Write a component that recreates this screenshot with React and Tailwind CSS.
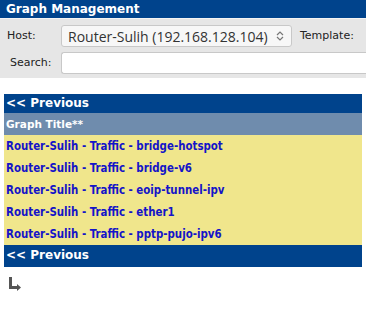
export default function App() {
  const rows = [
    'Router-Sulih - Traffic - bridge-hotspot',
    'Router-Sulih - Traffic - bridge-v6',
    'Router-Sulih - Traffic - eoip-tunnel-ipv',
    'Router-Sulih - Traffic - ether1',
    'Router-Sulih - Traffic - pptp-pujo-ipv6',
  ];

  return (
    <div className="w-[366px] h-[310px] overflow-hidden bg-white font-['DejaVu_Sans',sans-serif]">
      {/* filter box */}
      <div className="h-[18px] bg-[#00438c] text-white font-bold text-[12px] leading-[18px] pl-[6px]">
        Graph Management
      </div>
      <div className="bg-[#e6e6e6] border-t border-[#f4f4f4] h-[60px] pt-[6px]">
        <div className="flex items-center h-[22px]">
          <span className="w-[61px] pl-[7px] text-[11px] text-[#222]">Host:</span>
          <div className="w-[231px] h-[22px] bg-[#f7f7f7] border border-[#c8c8c8] rounded-[3px] flex items-center justify-between pl-[6px] pr-[7px] font-['Open_Sans',sans-serif] text-[14px] text-[#333]">
            <span>Router-Sulih (192.168.128.104)</span>
            <svg width="8" height="12" viewBox="0 0 8 12">
              <path d="M1 5 L4 2 L7 5" fill="none" stroke="#777" strokeWidth="1.2" />
              <path d="M1 7 L4 10 L7 7" fill="none" stroke="#777" strokeWidth="1.2" />
            </svg>
          </div>
          <span className="ml-[8px] text-[11px] text-[#222]">Template:</span>
        </div>
        <div className="flex items-center h-[22px] mt-[5px]">
          <span className="w-[61px] pl-[10px] text-[11px] text-[#222]">Search:</span>
          <div className="flex-1 h-[22px] bg-white border border-[#c8c8c8] rounded-l-[3px] border-r-0" />
        </div>
      </div>

      {/* graph list */}
      <div className="mx-[4px] mt-[16px]">
        <div className="h-[19px] bg-[#00438c] text-white font-bold text-[12px] leading-[19px] pl-[2px]">
          &lt;&lt; Previous
        </div>
        <div className="h-[22px] bg-[#6f8cad] text-white font-bold text-[10.5px] leading-[22px] pl-[2px]">
          Graph Title**
        </div>
        {rows.map((r) => (
          <div key={r} className="h-[22px] bg-[#f0e68c] text-[#1414c8] font-bold font-['DejaVu_Sans_Condensed',sans-serif] text-[11.4px] leading-[22px] pl-[2px]">
            {r}
          </div>
        ))}
        <div className="h-[22px] bg-[#00438c] text-white font-bold text-[12px] leading-[21px] pl-[2px]">
          &lt;&lt; Previous
        </div>
        <div className="pl-[4px] pt-[9px]">
          <svg width="14" height="16" viewBox="0 0 14 16">
            <path d="M2.5 1 V11.5 H9" fill="none" stroke="#555" strokeWidth="3" />
            <path d="M9 8 L13 11.5 L9 15 Z" fill="#555" />
          </svg>
        </div>
      </div>
    </div>
  );
}
